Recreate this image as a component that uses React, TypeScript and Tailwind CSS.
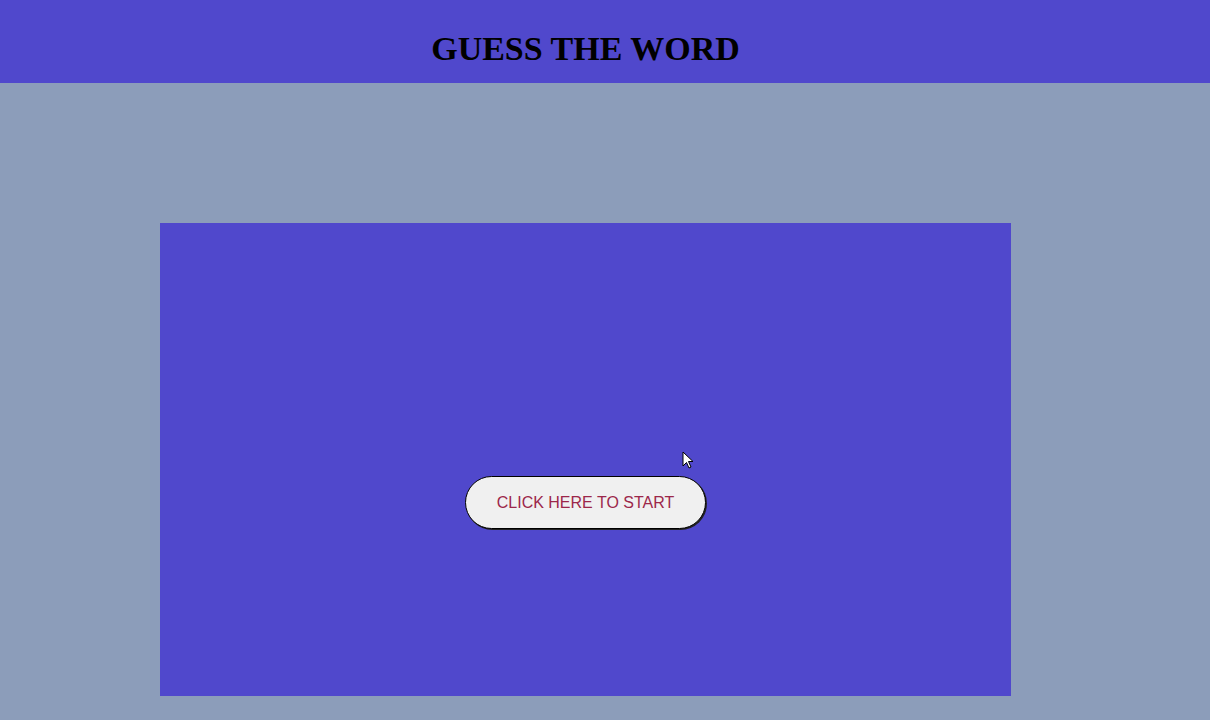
export default function App() {
  return (
    <div className="relative min-h-[720px] bg-[#8c9dba] pb-6" style={{ fontFamily: '"Liberation Sans", Arial, sans-serif' }}>
      <header className="h-[83px] bg-[#5048cc]">
        <div className="flex h-full w-[1171px] items-center justify-center pt-[15px]">
          <h1 className="text-[34px] font-bold leading-none text-black" style={{ fontFamily: '"Liberation Serif", "Times New Roman", serif' }}>
            GUESS THE WORD
          </h1>
        </div>
      </header>
      <main className="pl-[160px] pt-[140px]">
        <section className="flex h-[473px] w-[851px] items-center justify-center bg-[#5048cc] pt-[86px]">
          <button className="h-[53px] w-[241px] rounded-full border border-black bg-[#f0f0f0] text-[16px] text-[#9c274a] shadow-[1px_1px_0_#222]">
            CLICK HERE TO START
          </button>
        </section>
      </main>
      <svg className="absolute left-[682px] top-[451px]" width="12" height="18" viewBox="0 0 12 18">
        <path d="M1 1 L1 15 L4.5 11.5 L7 17 L9 16 L6.5 10.5 L11 10.5 Z" fill="#fff" stroke="#000" strokeWidth="1" />
      </svg>
    </div>
  )
}
